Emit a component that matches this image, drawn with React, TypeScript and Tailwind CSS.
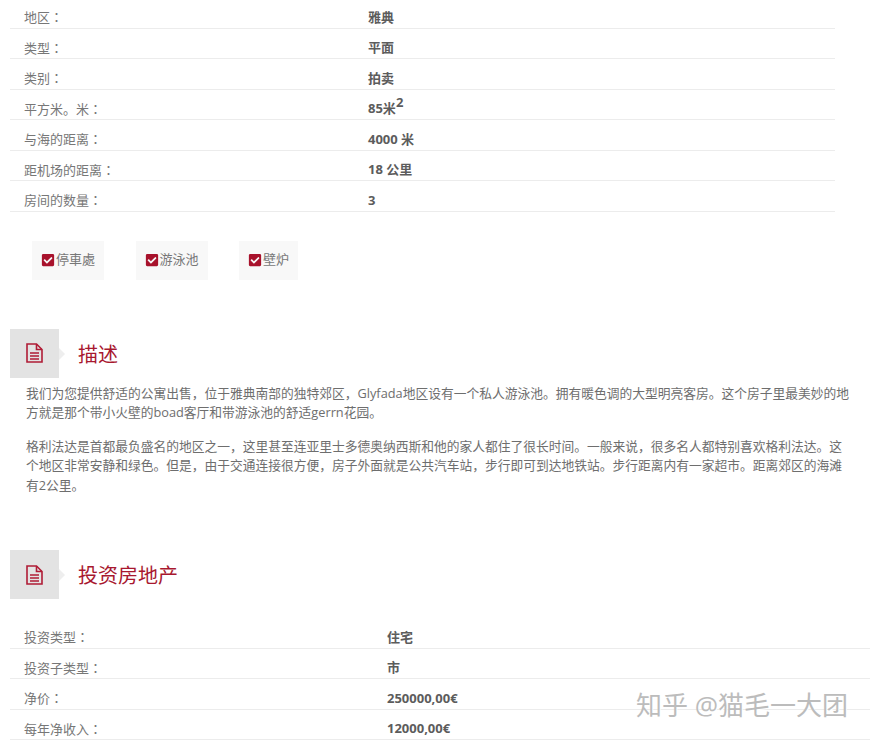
import { FaCheckSquare } from "react-icons/fa"

const font = "font-['Open_Sans','Noto_Sans_CJK_SC',sans-serif]"

const details = [
  ["地区", "雅典"],
  ["类型", "平面"],
  ["类别", "拍卖"],
  ["平方米。米", "85米²"],
  ["与海的距离", "4000 米"],
  ["距机场的距离", "18 公里"],
  ["房间的数量", "3"],
]

const invest = [
  ["投资类型", "住宅"],
  ["投资子类型", "市"],
  ["净价", "250000,00€"],
  ["每年净收入", "12000,00€"],
]

const Row = ({ label, value, col }: { label: string; value: string; col: string }) => {
  const sup = value.endsWith("²")
  return (
    <div className={`grid ${col} h-[30.5px] items-center border-b border-[#ececec] pl-[14px] pt-[9px] text-[13px]`}>
      <span className="text-[#777777]">
        {label}
        <span className="font-['Noto_Sans_CJK_TC']">：</span>
      </span>
      <span className="font-bold text-[#5c5c5c]">
        {sup ? (
          <>
            85米<sup className="text-[13px] leading-none">2</sup>
          </>
        ) : (
          value
        )}
      </span>
    </div>
  )
}

const Chip = ({ text }: { text: string }) => (
  <div className="flex h-[39px] items-center gap-[1px] bg-[#f8f8f8] px-[9px] text-[13px] text-[#777777]">
    <FaCheckSquare className="text-[14px] text-[#a8122c]" />
    <span>{text}</span>
  </div>
)

const FileIcon = () => (
  <svg width="17" height="20" viewBox="0 0 17 20" fill="none" stroke="#b01c36" strokeWidth="1.6">
    <path d="M1 1h9.5L16 6.5V19H1z" />
    <path d="M10.5 1v5.5H16" />
    <path d="M4 10h9M4 13h9M4 16h9" strokeWidth="1.3" />
  </svg>
)

const Heading = ({ title }: { title: string }) => (
  <div className="flex items-center">
    <div className="relative flex h-[49px] w-[49px] items-center justify-center bg-[#e3e3e3]">
      <FileIcon />
      <div className="absolute left-[49px] top-[19px] h-0 w-0 border-y-[6px] border-l-[6px] border-y-transparent border-l-[#eeeeee]" />
    </div>
    <h2 className="ml-[19px] pt-[3px] text-[20px] text-[#a8182f]">{title}</h2>
  </div>
)

const App = () => {
  return (
    <div className={`relative h-[740px] w-[870px] overflow-hidden bg-white ${font}`}>
      <div className="ml-[10px] mr-[35px] mt-[-2px]">
        {details.map(([label, value]) => (
          <Row key={label} label={label} value={value} col="grid-cols-[344px_1fr]" />
        ))}
      </div>

      <div className="ml-[32px] mt-[29px] flex gap-[31.5px]">
        <Chip text="停車處" />
        <Chip text="游泳池" />
        <Chip text="壁炉" />
      </div>

      <div className="ml-[10px] mt-[49px]">
        <Heading title="描述" />
      </div>

      <div className="ml-[26px] mr-[16px] mt-[6px] text-[12.75px] leading-[19.5px] text-[#6e6e6e]">
        <p>
          我们为您提供舒适的公寓出售，位于雅典南部的独特郊区，Glyfada地区设有一个私人游泳池。拥有暖色调的大型明亮客房。这个房子里最美妙的地方就是那个带小火壁的boad客厅和带游泳池的舒适gerrn花园。
        </p>
        <p className="mt-[14px]">
          格利法达是首都最负盛名的地区之一，这里甚至连亚里士多德奥纳西斯和他的家人都住了很长时间。一般来说，很多名人都特别喜欢格利法达。这个地区非常安静和绿色。但是，由于交通连接很方便，房子外面就是公共汽车站，步行即可到达地铁站。步行距离内有一家超市。距离郊区的海滩有2公里。
        </p>
      </div>

      <div className="ml-[10px] mt-[55px]">
        <Heading title="投资房地产" />
      </div>

      <div className="ml-[10px] mt-[19px]">
        {invest.map(([label, value]) => (
          <Row key={label} label={label} value={value} col="grid-cols-[363px_1fr]" />
        ))}
      </div>

      {/* watermark */}
      <div className="absolute left-[636px] top-[687px] text-[26px] leading-[36px] text-[#bcbcbc] [text-shadow:1px_1px_0_#ffffff]">
        知乎 @猫毛一大团
      </div>
    </div>
  )
}

export default App
